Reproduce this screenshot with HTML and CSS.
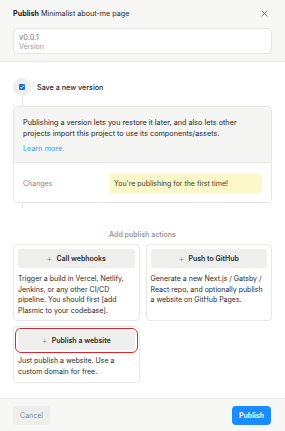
FILE: index.html
```html
<!DOCTYPE html>
<html>
<head>
<meta charset="utf-8">
<link rel="stylesheet" href="styles.css">
</head>
<body>
<div class="dialog">
  <header class="head">
    <div class="title-row">
      <div class="title"><b>Publish</b> Minimalist about-me page</div>
      <svg class="close" width="7" height="7" viewBox="0 0 7 7"><path d="M1 1L6 6M6 1L1 6" stroke="#777" stroke-width="1" stroke-linecap="round"/></svg>
    </div>
    <div class="version-input">
      <div class="v-num">v0.0.1</div>
      <div class="v-label">Version</div>
    </div>
  </header>

  <main class="body">
    <div class="step">
      <div class="step-dot"><span class="cb"><svg width="6" height="6" viewBox="0 0 6 6"><path d="M1.2 3.2L2.5 4.4L4.8 1.6" stroke="#fff" stroke-width="0.9" fill="none"/></svg></span></div>
      <div class="step-label">Save a new version</div>
    </div>
    <div class="step-track">
      <div class="info">
        <div class="info-top">
          <p class="info-text">Publishing a version lets you restore it later, and also lets other projects import this project to use its components/assets.</p>
          <a class="learn">Learn more.</a>
        </div>
        <div class="info-changes">
          <span class="changes-label">Changes</span>
          <span class="changes-note">You're publishing for the first time!</span>
        </div>
      </div>
    </div>

    <div class="actions-title">Add publish actions</div>
    <div class="cards">
      <div class="card">
        <div class="card-btn"><span class="plus">+</span>Call webhooks</div>
        <p class="card-desc">Trigger a build in Vercel, Netlify, Jenkins, or any other CI/CD pipeline. You should first [add Plasmic to your codebase].</p>
      </div>
      <div class="card">
        <div class="card-btn"><span class="plus">+</span>Push to GitHub</div>
        <p class="card-desc">Generate a new Next.js / Gatsby / React repo, and optionally publish a website on GitHub Pages.</p>
      </div>
      <div class="card">
        <div class="card-btn highlighted"><span class="plus">+</span>Publish a website</div>
        <p class="card-desc">Just publish a website. Use a custom domain for free.</p>
      </div>
    </div>
  </main>

  <footer class="foot">
    <div class="btn-cancel">Cancel</div>
    <div class="btn-publish">Publish</div>
  </footer>
</div>
</body>
</html>
```

FILE: styles.css
```css
* { box-sizing: border-box; }
html, body { margin: 0; padding: 0; }
body {
  width: 285px;
  height: 431px;
  font-family: Inter, "Noto Sans", sans-serif;
  font-size: 7px;
  color: #1d1d1b;
  background: #fff;
  overflow: hidden;
}
.dialog {
  display: flex;
  flex-direction: column;
  height: 431px;
}
.head {
  background: #f7f7f6;
  border-bottom: 1px solid #e8e8e6;
  padding: 7px 13px 7px 13px;
  height: 62px;
}
.title-row {
  display: flex;
  align-items: center;
  justify-content: space-between;
  height: 13px;
  margin-bottom: 8px;
  font-size: 7.2px;
}
.title b { font-weight: 700; }
.close { margin-right: 4px; }
.version-input {
  background: #fff;
  border: 1px solid #e6e6e4;
  border-radius: 4px;
  height: 26px;
  padding: 4px 5px 2px;
  line-height: 9px;
  font-size: 7.5px;
}
.v-num { color: #7a7a78; }
.v-label { color: #9a9a98; font-size: 7px; }

.body {
  flex: 1;
  padding: 16px 13px 0;
}
.step {
  display: flex;
  align-items: center;
  gap: 6px;
  height: 18px;
}
.step-dot {
  width: 18px;
  height: 18px;
  border-radius: 50%;
  background: #efefee;
  display: flex;
  align-items: center;
  justify-content: center;
}
.cb {
  width: 6px;
  height: 6px;
  background: #1a6fe0;
  border-radius: 1px;
  display: flex;
}
.step-label {
  font-size: 7.2px;
  font-weight: 500;
}
.step-track {
  margin-left: 9px;
  border-left: 1px solid #e4e4e2;
  padding: 10px 0 5px;
}
.info {
  margin-left: -10px;
  border: 1px solid #e7e7e5;
  border-radius: 4px;
  overflow: hidden;
}
.info-top {
  background: #f5f5f4;
  border-bottom: 1px solid #e7e7e5;
  padding: 10px 9px 8px;
  line-height: 11px;
  font-size: 7.25px;
}
.info-text { margin: 0; }
.learn {
  display: block;
  margin-top: 4px;
  color: #3d9bf2;
}
.info-changes {
  display: grid;
  grid-template-columns: 86px 1fr;
  align-items: center;
  padding: 10px 9px 9px;
  background: #fff;
}
.changes-label { color: #888886; }
.changes-note {
  background: #fcf8c9;
  border-radius: 3px;
  height: 20px;
  display: flex;
  align-items: center;
  padding: 0 5px;
  color: #3a3a30;
}
.actions-title {
  margin-top: 21px;
  text-align: center;
  color: #9a9a98;
  font-weight: 600;
  line-height: 11px;
}
.cards {
  margin-top: 4px;
  display: grid;
  grid-template-columns: 1fr 1fr;
  gap: 5px 6px;
}
.card {
  border: 1px solid #e8e8e6;
  border-radius: 4px;
  padding: 4px 4px 4px;
}
.card-btn {
  height: 19px;
  background: #eeeeec;
  border-radius: 3px;
  display: flex;
  align-items: center;
  justify-content: center;
  font-weight: 600;
  color: #2a2a28;
}
.card-btn.highlighted {
  outline: 1.5px solid #e0242c;
  outline-offset: 2px;
}
.plus {
  color: #8a8a88;
  font-weight: 300;
  font-size: 9px;
  margin-right: 4px;
  line-height: 1;
}
.card-desc {
  margin: 6px 0 0;
  line-height: 10.6px;
  color: #2a2a28;
}
.foot {
  height: 33px;
  background: #f7f7f6;
  border-top: 1px solid #e8e8e6;
  padding: 7px 14px 0 13px;
  display: flex;
  justify-content: space-between;
  align-items: flex-start;
}
.btn-cancel, .btn-publish {
  height: 19px;
  border-radius: 4px;
  display: flex;
  align-items: center;
  justify-content: center;
}
.btn-cancel {
  width: 37px;
  background: #eeeeec;
  color: #8a8a88;
}
.btn-publish {
  width: 39px;
  background: #1a8cff;
  color: #fff;
  font-weight: 600;
}
```
